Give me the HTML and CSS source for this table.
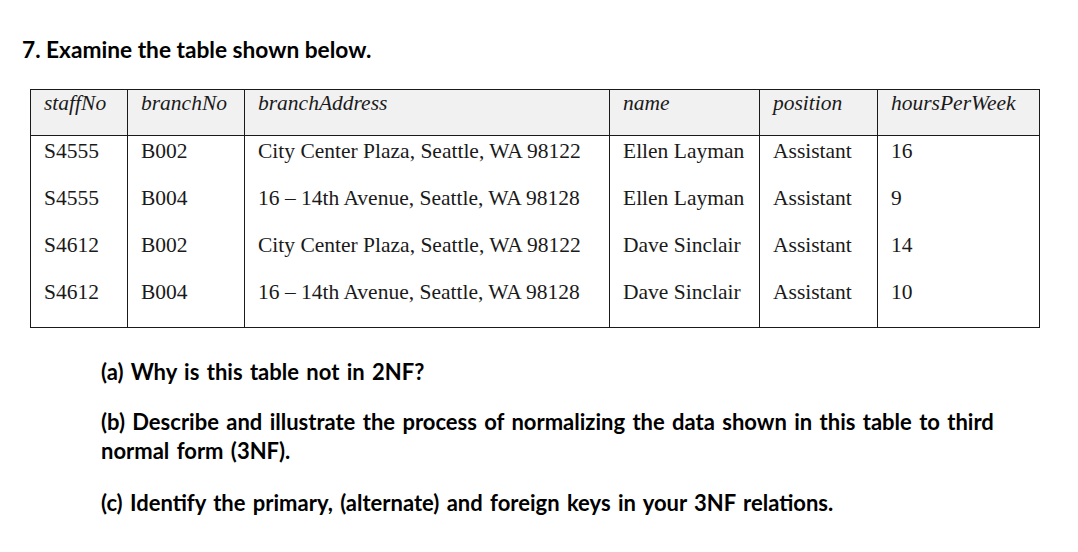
FILE: index.html
```html
<!DOCTYPE html>
<html>
<head>
<meta charset="utf-8">
<link rel="stylesheet" href="styles.css">
</head>
<body>
<div class="page">
  <h1 class="title">7. Examine the table shown below.</h1>
  <table class="data">
    <colgroup>
      <col class="c1"><col class="c2"><col class="c3"><col class="c4"><col class="c5"><col class="c6">
    </colgroup>
    <thead>
      <tr>
        <th>staffNo</th><th>branchNo</th><th>branchAddress</th><th>name</th><th>position</th><th>hoursPerWeek</th>
      </tr>
    </thead>
    <tbody>
      <tr><td>S4555</td><td>B002</td><td>City Center Plaza, Seattle, WA 98122</td><td>Ellen Layman</td><td>Assistant</td><td>16</td></tr>
      <tr><td>S4555</td><td>B004</td><td>16 – 14th Avenue, Seattle, WA 98128</td><td>Ellen Layman</td><td>Assistant</td><td>9</td></tr>
      <tr><td>S4612</td><td>B002</td><td>City Center Plaza, Seattle, WA 98122</td><td>Dave Sinclair</td><td>Assistant</td><td>14</td></tr>
      <tr><td>S4612</td><td>B004</td><td>16 – 14th Avenue, Seattle, WA 98128</td><td>Dave Sinclair</td><td>Assistant</td><td>10</td></tr>
    </tbody>
  </table>
  <div class="questions">
    <p class="q">(a) Why is this table not in 2NF?</p>
    <p class="q q-long">(b) Describe and illustrate the process of normalizing the data shown in this table to third normal form (3NF).</p>
    <p class="q">(c) Identify the primary, (alternate) and foreign keys in your 3NF relations.</p>
  </div>
</div>
</body>
</html>
```

FILE: styles.css
```css
html, body {
  margin: 0;
  padding: 0;
  background: #ffffff;
}

.page {
  width: 1078px;
  height: 552px;
  overflow: hidden;
  padding-top: 35px;
  box-sizing: border-box;
}

.title {
  margin: 0 0 0 22px;
  font-family: "Lato", "Open Sans", sans-serif;
  font-weight: 700;
  font-size: 22.7px;
  line-height: 30px;
  color: #000;
}

.data {
  margin: 24px 0 0 30px;
  border-collapse: collapse;
  table-layout: fixed;
  width: 1009px;
  font-family: "Liberation Serif", "Times New Roman", serif;
  font-size: 21.5px;
  color: #1a1a1a;
}

.c1 { width: 97px; }
.c2 { width: 117px; }
.c3 { width: 365px; }
.c4 { width: 150px; }
.c5 { width: 118px; }
.c6 { width: 162px; }

.data th,
.data td {
  border: 1px solid #1a1a1a;
  text-align: left;
  vertical-align: top;
  padding: 0 0 0 13px;
  white-space: nowrap;
}

.data thead th {
  background: #f1f1f1;
  font-weight: 400;
  font-style: italic;
  height: 46px;
  padding-top: 1px;
  box-sizing: border-box;
  line-height: 24px;
}

.data tbody td {
  border-top: none;
  border-bottom: none;
  height: 44px;
  padding-top: 3px;
  line-height: 24px;
}

.data tbody td:last-child {
  border-left-color: #555;
}

.data tbody tr:last-child td {
  border-bottom: 1px solid #1a1a1a;
  height: 47px;
}

.questions {
  margin: 29px 0 0 101px;
  font-family: "Lato", "Open Sans", sans-serif;
  font-weight: 700;
  font-size: 22px;
  line-height: 29px;
  word-spacing: 2px;
  color: #000;
  width: 940px;
}

.q {
  margin: 0 0 21px 0;
}

.q-long {
  margin-bottom: 23px;
}
```
